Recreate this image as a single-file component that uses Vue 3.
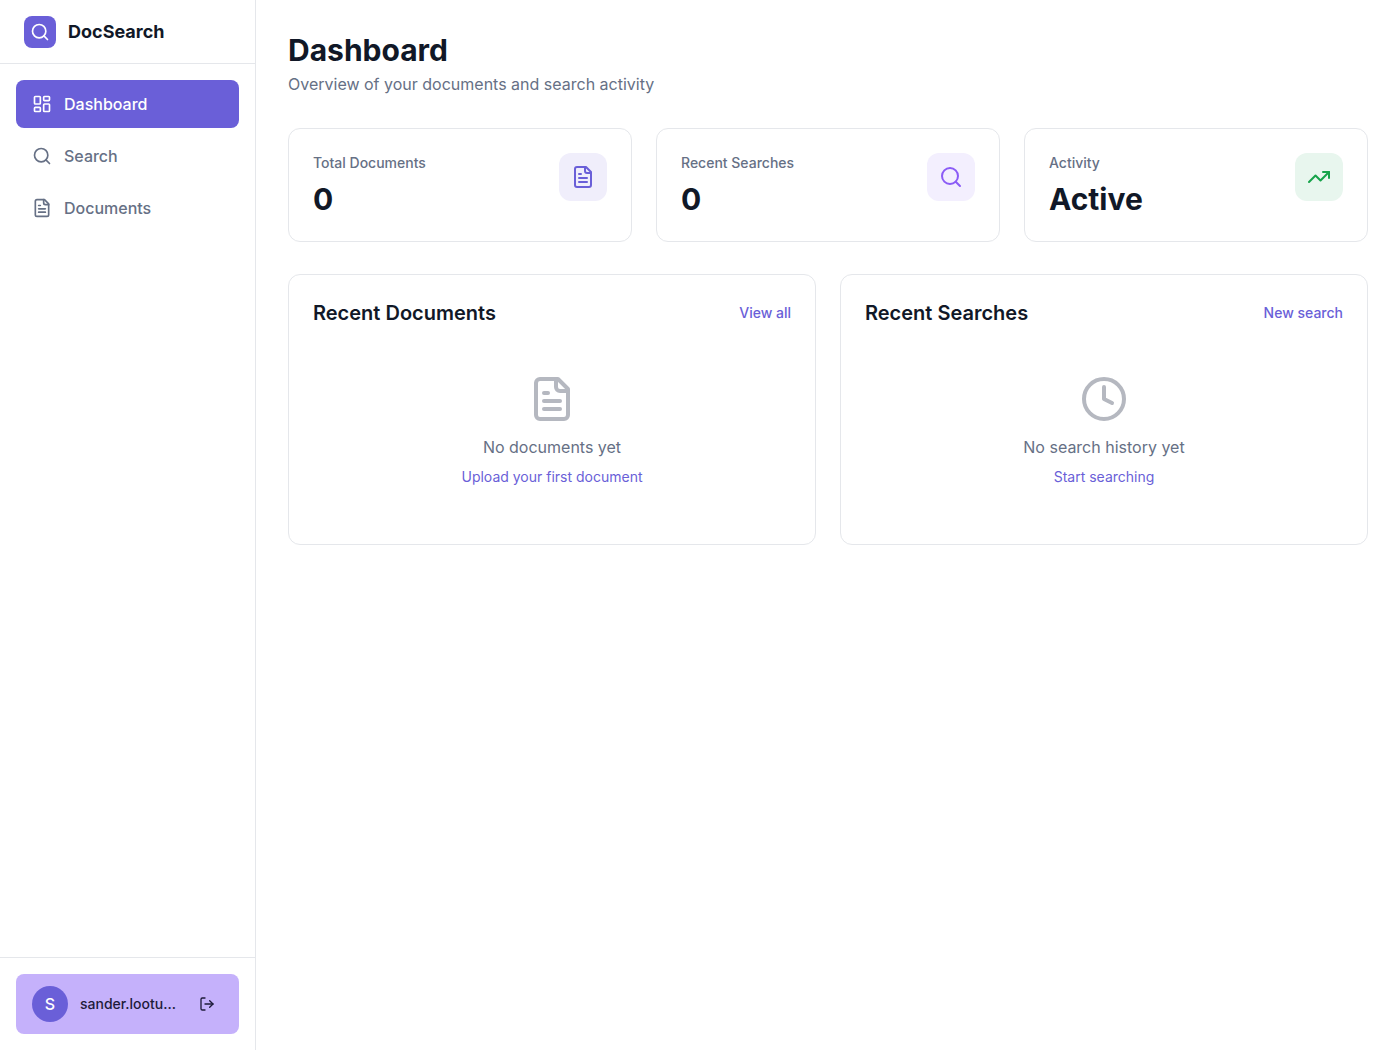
<script setup>
const navItems = [
  { label: 'Dashboard', icon: 'dashboard', active: true },
  { label: 'Search', icon: 'search', active: false },
  { label: 'Documents', icon: 'file', active: false }
];

const stats = [
  { label: 'Total Documents', value: '0', icon: 'file', tone: 'indigo' },
  { label: 'Recent Searches', value: '0', icon: 'search', tone: 'violet' },
  { label: 'Activity', value: 'Active', icon: 'trend', tone: 'green' }
];

const panels = [
  {
    title: 'Recent Documents',
    action: 'View all',
    icon: 'file',
    empty: 'No documents yet',
    link: 'Upload your first document'
  },
  {
    title: 'Recent Searches',
    action: 'New search',
    icon: 'clock',
    empty: 'No search history yet',
    link: 'Start searching'
  }
];

const iconParts = {
  search: [
    { tag: 'circle', cx: 11, cy: 11, r: 8 },
    { tag: 'path', d: 'm21 21-4.3-4.3' }
  ],
  dashboard: [
    { tag: 'rect', x: 3, y: 3, width: 7, height: 9, rx: 1 },
    { tag: 'rect', x: 14, y: 3, width: 7, height: 5, rx: 1 },
    { tag: 'rect', x: 14, y: 12, width: 7, height: 9, rx: 1 },
    { tag: 'rect', x: 3, y: 16, width: 7, height: 5, rx: 1 }
  ],
  file: [
    { tag: 'path', d: 'M15 2H6a2 2 0 0 0-2 2v16a2 2 0 0 0 2 2h12a2 2 0 0 0 2-2V7Z' },
    { tag: 'path', d: 'M14 2v4a2 2 0 0 0 2 2h4' },
    { tag: 'path', d: 'M10 9H8' },
    { tag: 'path', d: 'M16 13H8' },
    { tag: 'path', d: 'M16 17H8' }
  ],
  trend: [
    { tag: 'polyline', points: '22 7 13.5 15.5 8.5 10.5 2 17' },
    { tag: 'polyline', points: '16 7 22 7 22 13' }
  ],
  clock: [
    { tag: 'circle', cx: 12, cy: 12, r: 10 },
    { tag: 'polyline', points: '12 6 12 12 16 14' }
  ],
  logout: [
    { tag: 'path', d: 'M9 21H5a2 2 0 0 1-2-2V5a2 2 0 0 1 2-2h4' },
    { tag: 'polyline', points: '16 17 21 12 16 7' },
    { tag: 'line', x1: 21, y1: 12, x2: 9, y2: 12 }
  ]
};

const partAttrs = ({ tag, ...attrs }) => attrs;
</script>

<template>
  <div class="layout">
    <aside class="sidebar">
      <div class="brand">
        <div class="logo">
          <svg class="icon-20" viewBox="0 0 24 24">
            <component :is="part.tag" v-for="(part, i) in iconParts.search" :key="i" v-bind="partAttrs(part)" />
          </svg>
        </div>
        <span class="brand-name">DocSearch</span>
      </div>

      <nav class="nav">
        <a v-for="item in navItems" :key="item.label" class="nav-item" :class="{ active: item.active }">
          <svg class="icon-20" viewBox="0 0 24 24">
            <component :is="part.tag" v-for="(part, i) in iconParts[item.icon]" :key="i" v-bind="partAttrs(part)" />
          </svg>
          <span>{{ item.label }}</span>
        </a>
      </nav>

      <div class="sidebar-footer">
        <div class="user">
          <div class="avatar">S</div>
          <span class="user-name">sander.lootu…</span>
          <button class="logout" type="button" aria-label="Log out">
            <svg class="icon-16" viewBox="0 0 24 24">
              <component :is="part.tag" v-for="(part, i) in iconParts.logout" :key="i" v-bind="partAttrs(part)" />
            </svg>
          </button>
        </div>
      </div>
    </aside>

    <main class="main">
      <header class="page-head">
        <h1>Dashboard</h1>
        <p>Overview of your documents and search activity</p>
      </header>

      <section class="stats">
        <article v-for="stat in stats" :key="stat.label" class="card stat">
          <div>
            <div class="stat-label">{{ stat.label }}</div>
            <div class="stat-value">{{ stat.value }}</div>
          </div>
          <div class="stat-icon" :class="stat.tone">
            <svg class="icon-24" viewBox="0 0 24 24">
              <component :is="part.tag" v-for="(part, i) in iconParts[stat.icon]" :key="i" v-bind="partAttrs(part)" />
            </svg>
          </div>
        </article>
      </section>

      <section class="panels">
        <article v-for="panel in panels" :key="panel.title" class="card panel">
          <div class="panel-head">
            <h2>{{ panel.title }}</h2>
            <a class="link action">{{ panel.action }}</a>
          </div>
          <div class="empty">
            <svg class="icon-48" viewBox="0 0 24 24">
              <component :is="part.tag" v-for="(part, i) in iconParts[panel.icon]" :key="i" v-bind="partAttrs(part)" />
            </svg>
            <p>{{ panel.empty }}</p>
            <a class="link">{{ panel.link }}</a>
          </div>
        </article>
      </section>
    </main>
  </div>
</template>

<style scoped>
.layout {
  display: flex;
  min-height: 100vh;
  background: #fff;
  color: #111827;
  font-family: Inter, "Liberation Sans", sans-serif;
}

svg {
  display: block;
  flex-shrink: 0;
  fill: none;
  stroke: currentColor;
  stroke-width: 2;
  stroke-linecap: round;
  stroke-linejoin: round;
}

.icon-16 {
  width: 16px;
  height: 16px;
}

.icon-20 {
  width: 20px;
  height: 20px;
}

.icon-24 {
  width: 24px;
  height: 24px;
}

.icon-48 {
  width: 48px;
  height: 48px;
  color: #b5b8c0;
}

.sidebar {
  width: 256px;
  box-sizing: border-box;
  flex-shrink: 0;
  display: flex;
  flex-direction: column;
  border-right: 1px solid #e5e7eb;
}

.brand {
  height: 64px;
  box-sizing: border-box;
  padding: 0 24px;
  display: flex;
  align-items: center;
  gap: 12px;
  border-bottom: 1px solid #e5e7eb;
}

.logo {
  width: 32px;
  height: 32px;
  border-radius: 8px;
  background: #6a5fd8;
  color: #fff;
  display: flex;
  align-items: center;
  justify-content: center;
}

.brand-name {
  font-size: 18px;
  font-weight: 700;
}

.nav {
  flex: 1;
  padding: 16px;
  display: flex;
  flex-direction: column;
  gap: 4px;
}

.nav-item {
  height: 48px;
  box-sizing: border-box;
  padding: 0 16px;
  display: flex;
  align-items: center;
  gap: 12px;
  border-radius: 8px;
  color: #667085;
  font-size: 16px;
  font-weight: 500;
}

.nav-item.active {
  background: #6a5fd8;
  color: #fff;
}

.sidebar-footer {
  padding: 16px;
  border-top: 1px solid #e5e7eb;
}

.user {
  height: 60px;
  box-sizing: border-box;
  padding: 0 16px;
  display: flex;
  align-items: center;
  gap: 12px;
  border-radius: 8px;
  background: #c5b1fb;
}

.avatar {
  width: 36px;
  height: 36px;
  flex-shrink: 0;
  border-radius: 50%;
  background: #6a5fd8;
  color: #fff;
  font-size: 16px;
  font-weight: 500;
  display: flex;
  align-items: center;
  justify-content: center;
}

.user-name {
  flex: 1;
  min-width: 0;
  padding-bottom: 2px;
  font-size: 14px;
  font-weight: 500;
  white-space: nowrap;
  color: #1e1b3a;
}

.logout {
  width: 32px;
  height: 32px;
  flex-shrink: 0;
  padding: 0;
  border: none;
  background: none;
  color: #1e1b3a;
  display: flex;
  align-items: center;
  justify-content: center;
}

.main {
  flex: 1;
  min-width: 0;
  padding: 32px;
}

.page-head {
  margin-bottom: 32px;
}

h1 {
  margin: 0;
  font-size: 30px;
  line-height: 36px;
  font-weight: 700;
}

.page-head p {
  margin: 4px 0 0;
  font-size: 16px;
  line-height: 24px;
  color: #667085;
}

.stats {
  display: grid;
  grid-template-columns: repeat(3, 1fr);
  gap: 24px;
  margin-bottom: 32px;
}

.card {
  box-sizing: border-box;
  padding: 24px;
  border: 1px solid #e5e7eb;
  border-radius: 12px;
  background: #fff;
}

.stat {
  display: flex;
  justify-content: space-between;
  align-items: flex-start;
}

.stat-label {
  font-size: 14px;
  line-height: 20px;
  font-weight: 500;
  color: #667085;
}

.stat-value {
  margin-top: 8px;
  font-size: 30px;
  line-height: 36px;
  font-weight: 700;
}

.stat-icon {
  width: 48px;
  height: 48px;
  border-radius: 12px;
  display: flex;
  align-items: center;
  justify-content: center;
}

.stat-icon.indigo {
  background: #f0eefb;
  color: #6a5fd8;
}

.stat-icon.violet {
  background: #f3effe;
  color: #8b5cf6;
}

.stat-icon.green {
  background: #e8f6ee;
  color: #16a34a;
}

.panels {
  display: grid;
  grid-template-columns: repeat(2, 1fr);
  gap: 24px;
}

.panel-head {
  display: flex;
  justify-content: space-between;
  align-items: center;
}

h2 {
  margin: 0;
  font-size: 20px;
  line-height: 28px;
  font-weight: 600;
}

.link {
  font-size: 14px;
  line-height: 20px;
  font-weight: 400;
  color: #6a5fd8;
}

.link.action {
  font-weight: 500;
}

.empty {
  padding: 48px 0 33px;
  display: flex;
  flex-direction: column;
  align-items: center;
}

.empty p {
  margin: 12px 0 8px;
  font-size: 16px;
  line-height: 24px;
  color: #667085;
}
</style>
